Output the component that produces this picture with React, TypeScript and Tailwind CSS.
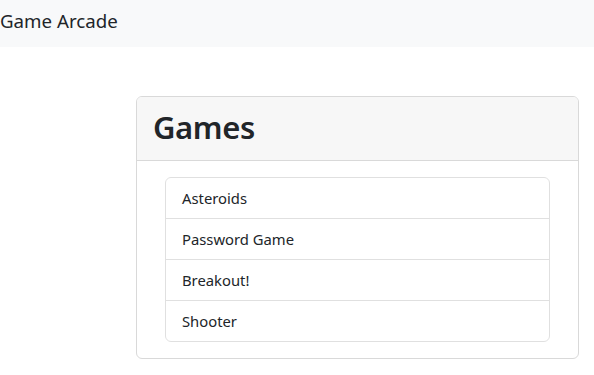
import React from 'react';

const games = ['Asteroids', 'Password Game', 'Breakout!', 'Shooter'];

const App: React.FC = () => {
  return (
    <div className="min-h-screen bg-white text-[#212529]" style={{ fontFamily: '"Noto Sans", sans-serif' }}>
      <nav className="h-[47px] bg-[#f8f9fa] flex items-center">
        <span className="text-[18.7px] leading-none text-[#212529] -mt-[4px]">Game Arcade</span>
      </nav>

      <div className="mt-[49px] ml-[136px] w-[443px] border border-[#d9d9d9] rounded-[6px] overflow-hidden">
        <div className="h-[64px] bg-[#f7f7f7] border-b border-[#d9d9d9] flex items-center px-[16px]">
          <h1 className="text-[31px] font-semibold leading-none tracking-[-0.4px] -mt-[2px]">Games</h1>
        </div>
        <div className="px-[28px] py-[16px]">
          <ul className="border border-[#e0e0e0] rounded-[6px]">
            {games.map((g, i) => (
              <li
                key={g}
                className={`flex items-center px-[16px] text-[14.8px] ${i > 0 ? 'border-t border-[#e0e0e0] h-[41px]' : 'h-[40px]'}`}
              >
                {g}
              </li>
            ))}
          </ul>
        </div>
      </div>
    </div>
  );
};

export default App;
